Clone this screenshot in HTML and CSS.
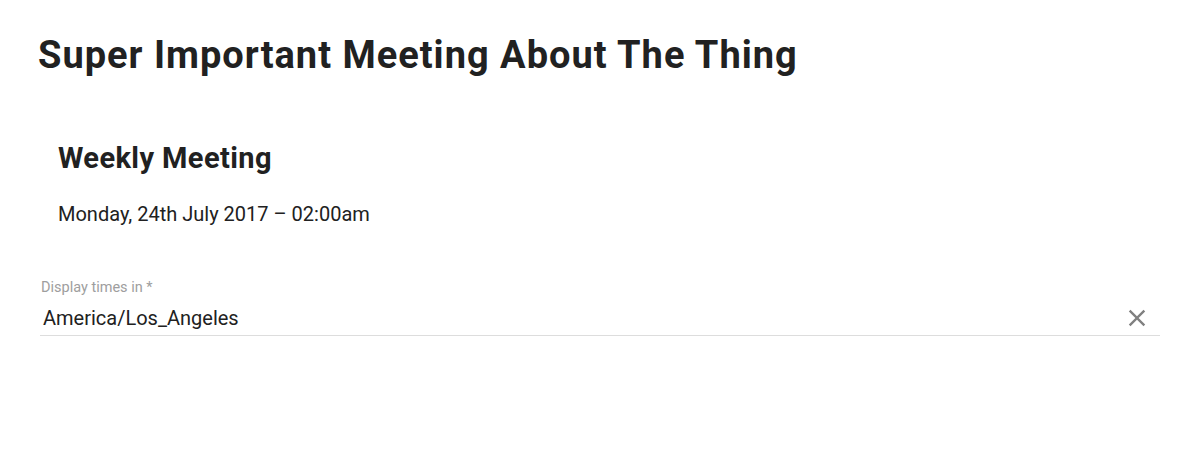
FILE: index.html
```html
<!DOCTYPE html>
<html>
<head>
<meta charset="utf-8">
<link rel="stylesheet" href="styles.css">
</head>
<body>
<div class="page">
  <h1 class="title">Super Important Meeting About The Thing</h1>
  <div class="event">
    <h2 class="event-name">Weekly Meeting</h2>
    <p class="event-time">Monday, 24th July 2017 – 02:00am</p>
  </div>
  <div class="field">
    <label class="field-label">Display times in *</label>
    <div class="field-input">
      <span class="field-value">America/Los_Angeles</span>
      <svg class="clear" width="28" height="28" viewBox="0 0 24 24"><path d="M19 6.41L17.59 5 12 10.59 6.41 5 5 6.41 10.59 12 5 17.59 6.41 19 12 13.41 17.59 19 19 17.59 13.41 12z" fill="#808080"/></svg>
    </div>
  </div>
</div>
</body>
</html>
```
FILE: styles.css
```css
html, body {
  margin: 0;
  padding: 0;
  background: #fff;
}
body {
  font-family: Roboto, "Liberation Sans", sans-serif;
  color: #212121;
}
.page {
  padding: 30px 40px 0 38px;
}
.title {
  margin: 0;
  font-size: 38px;
  font-weight: 700;
  line-height: 50px;
  letter-spacing: 1px;
}
.event {
  padding: 60px 0 0 20px;
}
.event-name {
  margin: 0;
  font-size: 29px;
  font-weight: 700;
  line-height: 36px;
  letter-spacing: 0.4px;
}
.event-time {
  margin: 26px 0 0;
  font-size: 20px;
  line-height: 24px;
}
.field {
  margin: 54px 0 0 2px;
  display: flex;
  flex-direction: column;
}
.field-label {
  font-size: 14.5px;
  line-height: 16px;
  color: #9e9e9e;
  padding-left: 1px;
}
.field-input {
  display: flex;
  align-items: center;
  justify-content: space-between;
  border-bottom: 1px solid #ddd;
  padding-top: 5px;
  height: 34px;
}
.field-value {
  font-size: 20px;
  padding-left: 3px;
}
.clear {
  margin-right: 9px;
}
```
